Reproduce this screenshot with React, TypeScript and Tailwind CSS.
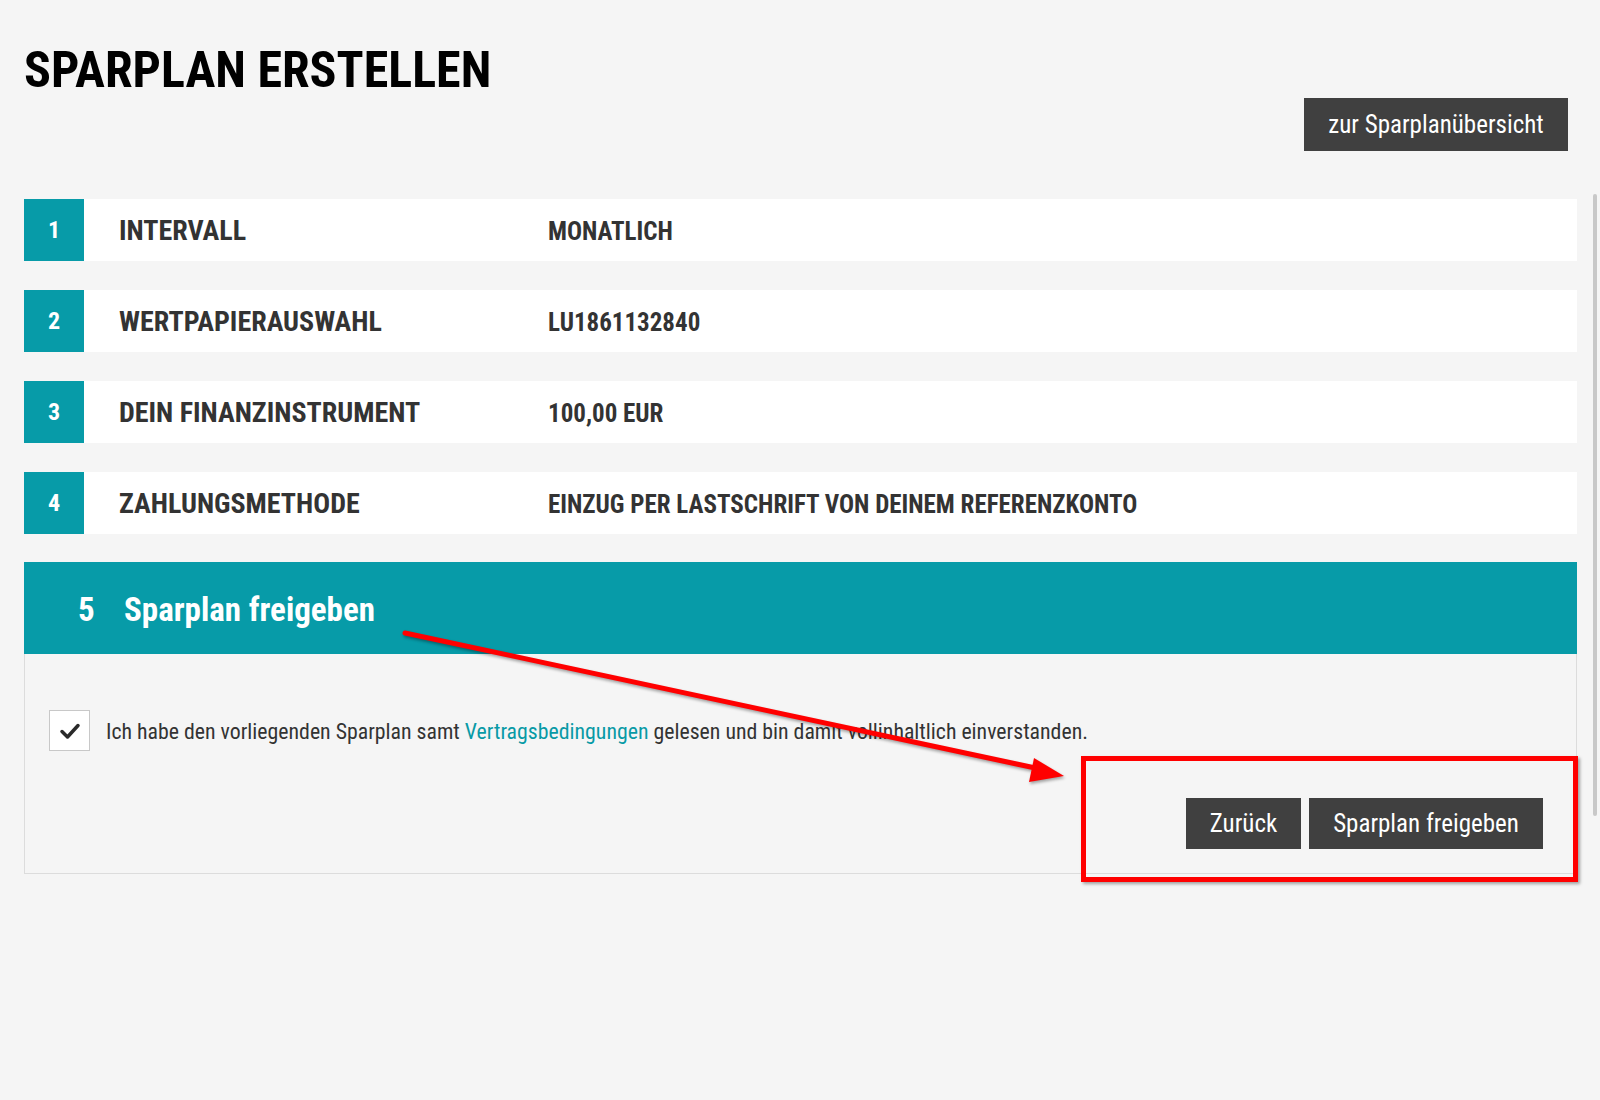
import React from "react";

const rows = [
  { n: "1", label: "INTERVALL", value: "MONATLICH" },
  { n: "2", label: "WERTPAPIERAUSWAHL", value: "LU1861132840" },
  { n: "3", label: "DEIN FINANZINSTRUMENT", value: "100,00 EUR" },
  { n: "4", label: "ZAHLUNGSMETHODE", value: "EINZUG PER LASTSCHRIFT VON DEINEM REFERENZKONTO" },
];

export default function App() {
  return (
    <div className="relative min-h-[1100px] bg-[#f5f5f5] pl-[24px] pr-[23px] pt-[40px] font-['Roboto_Condensed','Roboto',sans-serif] text-[#333]">
      <div className="flex items-start justify-between">
        <h1 className="text-[50px] leading-[60px] font-bold text-black">SPARPLAN ERSTELLEN</h1>
        <button className="mt-[58px] mr-[9px] h-[53px] w-[264px] bg-[#404040] text-[25px] text-white">
          zur Sparplanübersicht
        </button>
      </div>

      <div className="mt-[48px] flex flex-col gap-[29px]">
        {rows.map((r) => (
          <div key={r.n} className="flex h-[62px] items-center bg-white">
            <div className="flex h-full w-[60px] items-center justify-center bg-[#079ba8] text-[24px] font-bold text-white">
              {r.n}
            </div>
            <div className="w-[464px] pl-[35px] pt-[1px] text-[28px] font-bold">{r.label}</div>
            <div className="pt-[3px] text-[25px] font-bold">{r.value}</div>
          </div>
        ))}
      </div>

      <div className="mt-[28px]">
        <div className="flex h-[92px] items-center bg-[#079ba8] pl-[54px] pt-[3px] text-[33px] font-bold text-white">
          <span className="w-[46px]">5</span>
          <span>Sparplan freigeben</span>
        </div>
        <div className="border-x border-b border-[#dcdcdc] pl-[24px] pr-[33px] pt-[56px] pb-[24px]">
          <div className="flex items-center">
            <div className="flex h-[41px] w-[41px] items-center justify-center border border-[#c8c8c8] bg-white">
              <svg width="22" height="18" viewBox="0 0 22 18">
                <path d="M3 9.5 L8.5 15 L19 3.5" fill="none" stroke="#2a2a2a" strokeWidth="3.5" strokeLinecap="round" strokeLinejoin="round" />
              </svg>
            </div>
            <p className="ml-[16px] mt-[3px] text-[21.8px]">
              Ich habe den vorliegenden Sparplan samt{" "}
              <span className="text-[#089aa6]">Vertragsbedingungen</span> gelesen und bin damit vollinhaltlich
              einverstanden.
            </p>
          </div>
          <div className="mt-[47px] flex justify-end gap-[8px]">
            <button className="h-[51px] w-[115px] bg-[#404040] text-[25px] text-white">Zurück</button>
            <button className="h-[51px] w-[234px] bg-[#404040] text-[25px] text-white">Sparplan freigeben</button>
          </div>
        </div>
      </div>

      <div className="pointer-events-none absolute left-[1081px] top-[756px] h-[126px] w-[497px] border-[5px] border-[#ff0000] shadow-[2px_2px_3px_rgba(0,0,0,0.35)]" />

      <svg className="pointer-events-none absolute left-0 top-0" width="1600" height="1100" style={{ filter: "drop-shadow(1px 2px 1.5px rgba(0,0,0,0.35))" }}>
        <line x1="405" y1="633" x2="1040" y2="769" stroke="#ff0000" strokeWidth="5" strokeLinecap="round" />
        <polygon points="1064,776 1034,758 1029,782" fill="#ff0000" />
      </svg>

      <div className="absolute left-[1593px] top-[194px] h-[622px] w-[4px] rounded-full bg-[#c8c8c8]" />
    </div>
  );
}
